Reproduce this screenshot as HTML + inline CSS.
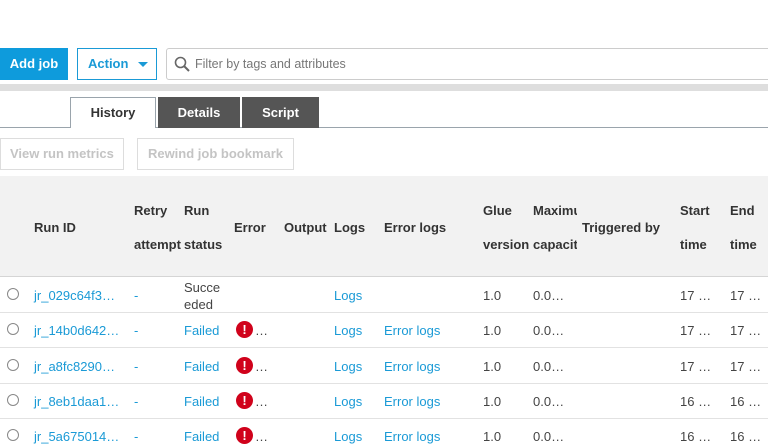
<!DOCTYPE html>
<html><head><style>
*{margin:0;padding:0;box-sizing:border-box}
body{width:768px;height:441px;overflow:hidden;background:#fff;font-family:"Liberation Sans",Arial,sans-serif;font-size:13px;color:#444;position:relative}
.a{position:absolute;white-space:nowrap}
.b{font-weight:bold;color:#333}
.l{color:#1a9ad6}
.hl{position:absolute;left:0;width:768px;height:1px;background:#e2e2e2}
.r{position:absolute;left:7px;width:12px;height:12px;border:1px solid #888;border-radius:50%;background:#fff}
.e{position:absolute;width:17px;height:17px;border-radius:50%;background:#d0021b;color:#fff;font-weight:bold;font-size:13px;text-align:center;line-height:17px}
</style></head><body>
<div class="a b" style="left:0;top:48px;width:68px;height:32px;background:#0e9bdc;color:#fff;line-height:32px;text-align:center">Add job</div>
<div class="a" style="left:77px;top:48px;width:80px;height:32px;border:1px solid #1a9ad6;color:#1a9ad6;font-weight:bold;line-height:30px;padding-left:10px">Action <span style="display:inline-block;margin-left:6px;border-left:5px solid transparent;border-right:5px solid transparent;border-top:5px solid #1a9ad6;vertical-align:middle"></span></div>
<div class="a" style="left:166px;top:48px;width:610px;height:32px;border:1px solid #ccc;border-radius:3px;color:#777;line-height:30px;padding-left:28px;font-size:12.5px">Filter by tags and attributes
<svg style="position:absolute;left:7px;top:7px" width="16" height="16" viewBox="0 0 16 16"><circle cx="6.5" cy="6.5" r="5" fill="none" stroke="#666" stroke-width="1.6"/><path d="M10 10L15 15" stroke="#666" stroke-width="2"/></svg></div>
<div class="a" style="left:0;top:84px;width:768px;height:7px;background:#dedede"></div>
<div class="a" style="left:0;top:127px;width:768px;height:1px;background:#9aa4ac"></div>
<div class="a b" style="left:70px;top:97px;width:86px;height:31px;background:#fff;border:1px solid #9aa4ac;border-bottom:none;text-align:center;line-height:30px">History</div>
<div class="a b" style="left:158px;top:97px;width:82px;height:31px;background:#555;color:#fff;text-align:center;line-height:31px">Details</div>
<div class="a b" style="left:242px;top:97px;width:77px;height:31px;background:#555;color:#fff;text-align:center;line-height:31px">Script</div>
<div class="a" style="left:0;top:138px;width:124px;height:32px;border:1px solid #ddd;color:#c4c4c4;font-weight:bold;line-height:30px;padding-left:9px">View run metrics</div>
<div class="a" style="left:137px;top:138px;width:157px;height:32px;border:1px solid #ddd;color:#c4c4c4;font-weight:bold;line-height:30px;text-align:center">Rewind job bookmark</div>
<div class="a" style="left:0;top:176px;width:768px;height:101px;background:#f2f2f2;border-bottom:1px solid #d5d5d5"></div>
<div class="a b" style="left:34px;top:220px">Run ID</div>
<div class="a b" style="left:134px;top:203px">Retry</div><div class="a b" style="left:134px;top:237px;width:49px;overflow:hidden">attempt</div>
<div class="a b" style="left:184px;top:203px">Run</div><div class="a b" style="left:184px;top:237px">status</div>
<div class="a b" style="left:234px;top:220px">Error</div>
<div class="a b" style="left:284px;top:220px">Output</div>
<div class="a b" style="left:334px;top:220px">Logs</div>
<div class="a b" style="left:384px;top:220px">Error logs</div>
<div class="a b" style="left:483px;top:203px">Glue</div><div class="a b" style="left:483px;top:237px;width:46px;overflow:hidden">version</div>
<div class="a b" style="left:533px;top:203px;width:44px;overflow:hidden">Maximum</div><div class="a b" style="left:533px;top:237px;width:44px;overflow:hidden">capacity</div>
<div class="a b" style="left:582px;top:220px">Triggered by</div>
<div class="a b" style="left:680px;top:203px">Start</div><div class="a b" style="left:680px;top:237px">time</div>
<div class="a b" style="left:730px;top:203px">End</div><div class="a b" style="left:730px;top:237px">time</div>

<div class="hl" style="top:312px"></div><div class="hl" style="top:347px"></div><div class="hl" style="top:383px"></div><div class="hl" style="top:418px"></div>

<div class="r" style="top:288px"></div>
<div class="a l" style="left:34px;top:288px">jr_029c64f3…</div><div class="a l" style="left:134px;top:288px">-</div>
<div class="a" style="left:184px;top:279px;line-height:17px">Succe<br>eded</div>
<div class="a l" style="left:334px;top:288px">Logs</div>
<div class="a" style="left:483px;top:288px">1.0</div><div class="a" style="left:533px;top:288px">0.0…</div>
<div class="a" style="left:680px;top:288px">17 …</div><div class="a" style="left:730px;top:288px">17 …</div>

<div class="r" style="top:323px"></div>
<div class="a l" style="left:34px;top:323px">jr_14b0d642…</div><div class="a l" style="left:134px;top:323px">-</div><div class="a l" style="left:184px;top:323px">Failed</div>
<div class="e" style="left:236px;top:321px">!</div><div class="a" style="left:255px;top:323px">…</div>
<div class="a l" style="left:334px;top:323px">Logs</div><div class="a l" style="left:384px;top:323px">Error logs</div>
<div class="a" style="left:483px;top:323px">1.0</div><div class="a" style="left:533px;top:323px">0.0…</div>
<div class="a" style="left:680px;top:323px">17 …</div><div class="a" style="left:730px;top:323px">17 …</div>

<div class="r" style="top:359px"></div>
<div class="a l" style="left:34px;top:359px">jr_a8fc8290…</div><div class="a l" style="left:134px;top:359px">-</div><div class="a l" style="left:184px;top:359px">Failed</div>
<div class="e" style="left:236px;top:357px">!</div><div class="a" style="left:255px;top:359px">…</div>
<div class="a l" style="left:334px;top:359px">Logs</div><div class="a l" style="left:384px;top:359px">Error logs</div>
<div class="a" style="left:483px;top:359px">1.0</div><div class="a" style="left:533px;top:359px">0.0…</div>
<div class="a" style="left:680px;top:359px">17 …</div><div class="a" style="left:730px;top:359px">17 …</div>

<div class="r" style="top:394px"></div>
<div class="a l" style="left:34px;top:394px">jr_8eb1daa1…</div><div class="a l" style="left:134px;top:394px">-</div><div class="a l" style="left:184px;top:394px">Failed</div>
<div class="e" style="left:236px;top:392px">!</div><div class="a" style="left:255px;top:394px">…</div>
<div class="a l" style="left:334px;top:394px">Logs</div><div class="a l" style="left:384px;top:394px">Error logs</div>
<div class="a" style="left:483px;top:394px">1.0</div><div class="a" style="left:533px;top:394px">0.0…</div>
<div class="a" style="left:680px;top:394px">16 …</div><div class="a" style="left:730px;top:394px">16 …</div>

<div class="r" style="top:429px"></div>
<div class="a l" style="left:34px;top:429px">jr_5a675014…</div><div class="a l" style="left:134px;top:429px">-</div><div class="a l" style="left:184px;top:429px">Failed</div>
<div class="e" style="left:236px;top:427px">!</div><div class="a" style="left:255px;top:429px">…</div>
<div class="a l" style="left:334px;top:429px">Logs</div><div class="a l" style="left:384px;top:429px">Error logs</div>
<div class="a" style="left:483px;top:429px">1.0</div><div class="a" style="left:533px;top:429px">0.0…</div>
<div class="a" style="left:680px;top:429px">16 …</div><div class="a" style="left:730px;top:429px">16 …</div>
</body></html>
